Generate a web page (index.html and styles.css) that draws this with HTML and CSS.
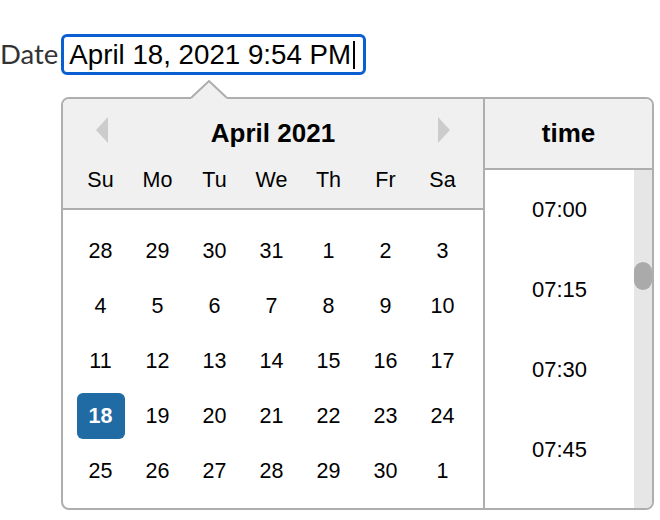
FILE: index.html
```html
<!DOCTYPE html>
<html>
<head>
<meta charset="utf-8">
<link rel="stylesheet" href="styles.css">
</head>
<body>
<div class="field">
  <label class="label">Date</label>
  <div class="input"><span class="value">April 18, 2021 9:54 PM</span><span class="caret"></span></div>
</div>
<div class="popup">
  <svg class="arrow" width="36" height="20" viewBox="0 0 36 20">
    <polygon points="0,20 0,18 18,1 36,18 36,20" fill="#f0f0f0"/>
    <polyline points="0,18 18,1 36,18" fill="none" stroke="#aeaeae" stroke-width="2"/>
  </svg>
  <div class="popup-inner">
    <div class="calendar">
      <div class="cal-header">
        <div class="title-row">
          <span class="nav nav-prev"></span>
          <span class="month-title">April 2021</span>
          <span class="nav nav-next"></span>
        </div>
        <div class="week names">
          <div class="day-name">Su</div><div class="day-name">Mo</div><div class="day-name">Tu</div><div class="day-name">We</div><div class="day-name">Th</div><div class="day-name">Fr</div><div class="day-name">Sa</div>
        </div>
      </div>
      <div class="month-body">
        <div class="week">
          <div class="day">28</div><div class="day">29</div><div class="day">30</div><div class="day">31</div><div class="day">1</div><div class="day">2</div><div class="day">3</div>
        </div>
        <div class="week">
          <div class="day">4</div><div class="day">5</div><div class="day">6</div><div class="day">7</div><div class="day">8</div><div class="day">9</div><div class="day">10</div>
        </div>
        <div class="week">
          <div class="day">11</div><div class="day">12</div><div class="day">13</div><div class="day">14</div><div class="day">15</div><div class="day">16</div><div class="day">17</div>
        </div>
        <div class="week">
          <div class="day selected">18</div><div class="day">19</div><div class="day">20</div><div class="day">21</div><div class="day">22</div><div class="day">23</div><div class="day">24</div>
        </div>
        <div class="week">
          <div class="day">25</div><div class="day">26</div><div class="day">27</div><div class="day">28</div><div class="day">29</div><div class="day">30</div><div class="day">1</div>
        </div>
      </div>
    </div>
    <div class="time">
      <div class="time-header">time</div>
      <div class="time-body">
        <ul class="time-list">
          <li class="time-item">07:00</li>
          <li class="time-item">07:15</li>
          <li class="time-item">07:30</li>
          <li class="time-item">07:45</li>
        </ul>
        <div class="track"><div class="thumb"></div></div>
      </div>
    </div>
  </div>
</div>
</body>
</html>
```
FILE: styles.css
```css
* { box-sizing: border-box; }
body {
  margin: 0;
  font-family: "Liberation Sans", Arial, Helvetica, sans-serif;
  color: #000;
  background: #fff;
}
.field {
  display: flex;
  align-items: baseline;
  gap: 3px;
  padding-top: 34px;
}
.label {
  font-family: Lato, "Liberation Sans", sans-serif;
  font-size: 27.5px;
  color: #333;
}
.input {
  width: 305px;
  height: 41px;
  border: 3px solid #0a5fd2;
  border-radius: 6px;
  display: flex;
  align-items: center;
  padding-left: 5px;
  font-size: 27.7px;
  color: #000;
}
.caret {
  width: 2px;
  height: 28px;
  background: #000;
  margin-left: 2px;
}
.popup {
  position: relative;
  margin-top: 22px;
  margin-left: 61px;
  width: 593px;
  height: 413px;
  border: 2px solid #aeaeae;
  border-radius: 8px;
  background: #fff;
}
.arrow {
  position: absolute;
  left: 128px;
  top: -19px;
  display: block;
}
.popup-inner {
  display: flex;
  height: 100%;
  border-radius: 6px;
  overflow: hidden;
}
.calendar {
  width: 420px;
}
.cal-header {
  height: 111px;
  padding-top: 14px;
  background: #f0f0f0;
  border-bottom: 2px solid #aeaeae;
}
.title-row {
  display: flex;
  align-items: center;
  justify-content: space-between;
  height: 40px;
  padding: 0 33px;
}
.nav {
  width: 0;
  height: 0;
  border-top: 13px solid transparent;
  border-bottom: 13px solid transparent;
  margin-bottom: 6px;
}
.nav-prev { border-right: 12px solid #ccc; }
.nav-next { border-left: 12px solid #ccc; }
.month-title {
  font-weight: bold;
  font-size: 26px;
}
.week {
  display: grid;
  grid-template-columns: repeat(7, 57px);
  padding-left: 9px;
}
.day-name {
  height: 55px;
  line-height: 55px;
  text-align: center;
  font-size: 21.5px;
}
.month-body {
  padding-top: 13px;
}
.day {
  width: 48px;
  height: 46px;
  margin: 4.5px;
  line-height: 46px;
  text-align: center;
  font-size: 21.5px;
  border-radius: 6px;
}
.day.selected {
  background: #216ba5;
  color: #fff;
  font-weight: bold;
}
.time {
  width: 169px;
  border-left: 2px solid #aeaeae;
  display: flex;
  flex-direction: column;
}
.time-header {
  height: 71px;
  background: #f0f0f0;
  border-bottom: 2px solid #aeaeae;
  display: flex;
  align-items: center;
  justify-content: center;
  font-weight: bold;
  font-size: 26px;
}
.time-body {
  flex: 1;
  display: flex;
  overflow: hidden;
}
.time-list {
  flex: 1;
  list-style: none;
  margin: 0;
  padding: 0;
}
.time-item {
  height: 80px;
  line-height: 80px;
  text-align: center;
  font-size: 22px;
}
.track {
  width: 18px;
  background: #e6e6e6;
  padding-top: 92px;
}
.thumb {
  width: 18px;
  height: 28px;
  border-radius: 9px;
  background: #aaa;
}
```
